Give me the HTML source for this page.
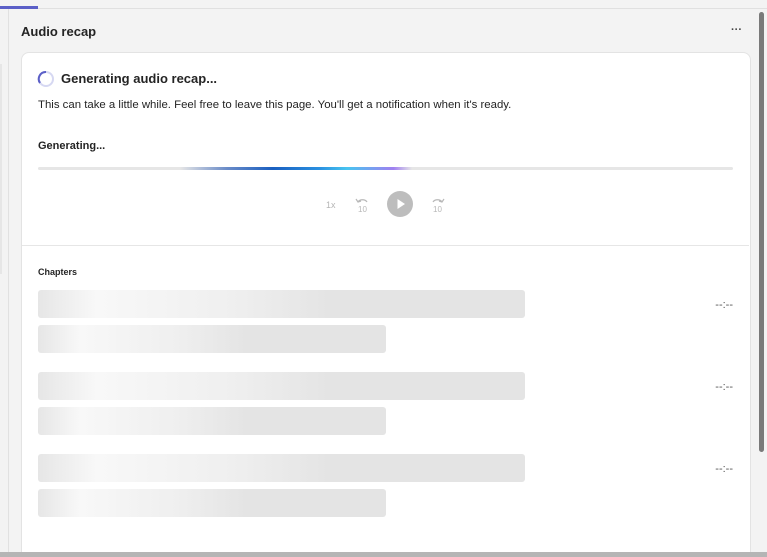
<!DOCTYPE html>
<html style="overflow:hidden;height:557px"><head><style>
body{margin:0;width:767px;height:557px;overflow:hidden;background:#f3f3f3;font-family:"Liberation Sans",sans-serif;position:relative}
.abs{position:absolute}
.sk{position:absolute;left:38px;height:28px;border-radius:3px;background:linear-gradient(90deg,#e6e6e6 0%,#f8f8f8 12%,#efefef 40%,#e4e4e4 60%,#e4e4e4 100%)}
.t{position:absolute;right:34px;font-size:11px;color:#555}
</style></head><body>
<div class="abs" style="left:0;top:8px;width:767px;height:1px;background:#e0e0e0"></div>
<div class="abs" style="left:0;top:6px;width:38px;height:3px;background:#5b5fc7"></div>
<div class="abs" style="left:8px;top:9px;width:1px;height:545px;background:#e1e1e1"></div>
<div class="abs" style="left:0;top:64px;width:2px;height:210px;background:#e6e6e6"></div>
<div class="abs" style="left:21px;top:24px;font-size:13px;font-weight:bold;color:#242424">Audio recap</div>
<div class="abs" style="left:731px;top:24px;font-size:11px;font-weight:bold;color:#424242;letter-spacing:0px">···</div>
<div class="abs" style="left:759px;top:12px;width:5px;height:440px;border-radius:3px;background:#7a7a7a"></div>
<div class="abs" style="left:21px;top:52px;width:728px;height:510px;background:#fff;border:1px solid #e3e3e3;border-radius:8px"></div>
<svg class="abs" style="left:37px;top:70px" width="18" height="18" viewBox="0 0 18 18"><circle cx="9" cy="9" r="7" fill="none" stroke="#d6d8f2" stroke-width="2"/><path d="M9 2A7 7 0 0 0 3 13" fill="none" stroke="#5b5fc7" stroke-width="2"/></svg>
<div class="abs" style="left:61px;top:71px;font-size:13px;font-weight:bold;color:#242424">Generating audio recap...</div>
<div class="abs" style="left:38px;top:99px;font-size:11.4px;color:#242424">This can take a little while. Feel free to leave this page. You'll get a notification when it's ready.</div>
<div class="abs" style="left:38px;top:140px;font-size:11px;font-weight:bold;color:#242424">Generating...</div>
<div class="abs" style="left:38px;top:167px;width:695px;height:3px;border-radius:2px;background:#e6e6e6"></div>
<div class="abs" style="left:180px;top:167px;width:232px;height:3px;background:linear-gradient(90deg,rgba(200,210,230,0) 0%,#6b8cc8 20%,#1a5fc0 40%,#2a90e0 60%,#48c4f0 72%,#a080f0 92%,rgba(220,200,250,0) 100%)"></div>
<div class="abs" style="left:326px;top:200px;font-size:9px;color:#b5b5b5">1x</div>
<svg class="abs" style="left:354px;top:196px" width="16" height="18"><path d="M4 6A5 4 0 0 1 13 6" fill="none" stroke="#b8b8b8" stroke-width="1.2"/><path d="M2 3L4 6L7 5" fill="none" stroke="#b8b8b8" stroke-width="1.2"/><text x="4" y="16" font-size="8" fill="#b8b8b8" font-family="Liberation Sans">10</text></svg>
<div class="abs" style="left:387px;top:191px;width:26px;height:26px;border-radius:50%;background:#bdbdbd"></div>
<svg class="abs" style="left:387px;top:191px" width="26" height="26"><path d="M10.5 8L18 13L10.5 18Z" fill="#fff"/></svg>
<svg class="abs" style="left:430px;top:196px" width="16" height="18"><path d="M3 6A5 4 0 0 1 12 6" fill="none" stroke="#b8b8b8" stroke-width="1.2"/><path d="M14 3L12 6L9 5" fill="none" stroke="#b8b8b8" stroke-width="1.2"/><text x="3" y="16" font-size="8" fill="#b8b8b8" font-family="Liberation Sans">10</text></svg>
<div class="abs" style="left:22px;top:245px;width:727px;height:1px;background:#e6e6e6"></div>
<div class="abs" style="left:38px;top:267px;font-size:9px;font-weight:bold;color:#242424">Chapters</div>
<div class="sk" style="top:290px;width:487px"></div><div class="sk" style="top:325px;width:348px"></div><div class="t" style="top:299px">--:--</div>
<div class="sk" style="top:372px;width:487px"></div><div class="sk" style="top:407px;width:348px"></div><div class="t" style="top:381px">--:--</div>
<div class="sk" style="top:454px;width:487px"></div><div class="sk" style="top:489px;width:348px"></div><div class="t" style="top:463px">--:--</div>
<div class="abs" style="left:0;top:552px;width:767px;height:5px;background:#b5b5b5"></div>
</body></html>
